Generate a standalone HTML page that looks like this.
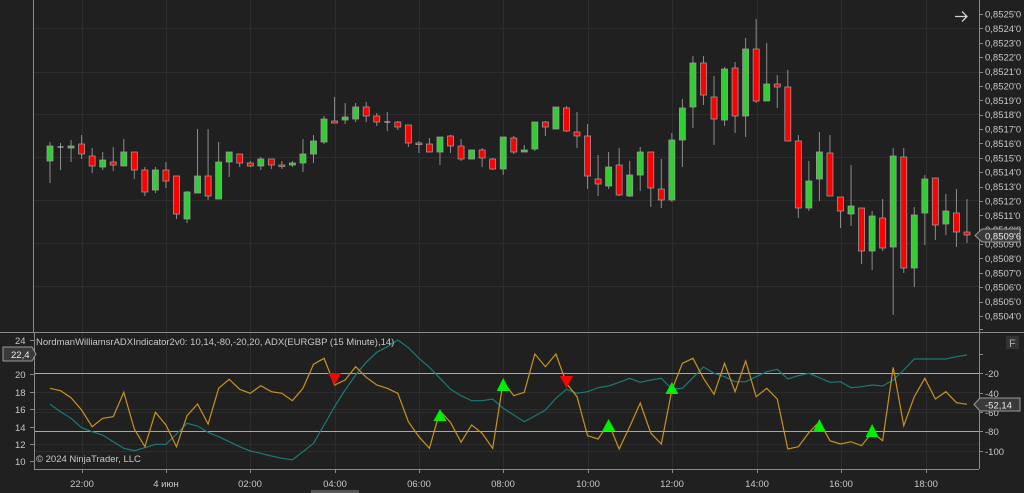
<!DOCTYPE html>
<html><head><meta charset="utf-8"><style>
html,body{margin:0;padding:0;background:#202020;width:1024px;height:493px;overflow:hidden}
svg{display:block;font-family:"Liberation Sans",sans-serif}
</style></head><body>
<svg width="1024" height="493" viewBox="0 0 1024 493" xmlns="http://www.w3.org/2000/svg">
<rect width="1024" height="493" fill="#202020"/>
<!-- grid -->
<g stroke="#2d2d2d" stroke-width="1">
<path d="M34 28.5H979M34 72.5H979M34 114.5H979M34 157.5H979M34 200.5H979M34 243.5H979M34 286.5H979"/>
<path d="M82.5 0V332M166.5 0V332M250.5 0V332M335.5 0V332M419.5 0V332M503.5 0V332M588.5 0V332M672.5 0V332M757.5 0V332M841.5 0V332M926.5 0V332"/>
<path d="M82.5 334V469M166.5 334V469M250.5 334V469M335.5 334V469M419.5 334V469M503.5 334V469M588.5 334V469M672.5 334V469M757.5 334V469M841.5 334V469M926.5 334V469"/>
<path d="M35 392.5H979M35 409.5H979M35 444.5H979M35 412.5H979M35 451.5H979"/>
</g>
<!-- axes -->
<g stroke="#8a8a8a" stroke-width="1" fill="none">
<path d="M33.5 0V332M979.5 0V469M0 332.5H1024M34.5 333V469M34 469.5H979"/>
<path d="M979 14.5h4M979 28.5h4M979 43.5h4M979 57.5h4M979 72.5h4M979 86.5h4M979 100.5h4M979 115.5h4M979 129.5h4M979 143.5h4M979 158.5h4M979 172.5h4M979 187.5h4M979 201.5h4M979 215.5h4M979 230.5h4M979 244.5h4M979 258.5h4M979 273.5h4M979 287.5h4M979 302.5h4M979 316.5h4M979 329.5h4"/>
<path d="M30 340.5h4M30 374.5h4M30 392.5h4M30 409.5h4M30 427.5h4M30 444.5h4M30 461.5h4M979 354.5h4M979 373.5h4M979 393.5h4M979 412.5h4M979 431.5h4M979 451.5h4"/>
<path d="M82.5 469v4M166.5 469v4M250.5 469v4M335.5 469v4M419.5 469v4M503.5 469v4M588.5 469v4M672.5 469v4M757.5 469v4M841.5 469v4M926.5 469v4"/>
</g>
<g stroke="#a8a8a8" stroke-width="1"><path d="M35 373.5H979M35 431.5H979"/></g>
<!-- candles -->
<g transform="translate(50,0) scale(1.0038,1)">
<path stroke="#8c8c8c" stroke-width="1" fill="none" d="M0 142V183M10.5 143V170M21 140V162M31.5 135V159M42 148V173M52.5 152V170M63 147V171M73.5 139V166M84 152V179M94.5 167V196M105 167V193M115.5 162V188M126 176V219M136.5 191V223M147 129V193M157.5 129V200M168 142V199M178.5 152V177M189 154V167M199.5 161V167M210 157V170M220.5 159V169M231 161V169M241.5 161V167M252 139V172M262.5 135V163M273 116V144M283.5 97V123M294 103V124M304.5 103V122M315 102V122M325.5 113V126M336 112V131M346.5 121V130M357 125V147M367.5 141V153M378 138V152M388.5 137V165M399 135V153M409.5 139V161M420 150V159M430.5 148V167M441 158V170M451.5 137V175M462 136V154M472.5 145V152M483 122V151M493.5 121V136M504 107V129M514.5 106V132M525 112V148M535.5 124V189M546 155V196M556.5 152V189M567 148V196M577.5 161V197M588 147V191M598.5 152V207M609 159V208M619.5 133V202M630 99V167M640.5 56V128M651 56V105M661.5 76V145M672 67V126M682.5 62V133M693 38V137M703.5 19V103M714 43V101M724.5 75V108M735 70V141M745.5 135V218M756 161V211M766.5 132V201M777 135V196M787.5 197V228M798 165V226M808.5 208V264M819 211V270M829.5 199V251M840 148V315M850.5 148V273M861 207V287M871.5 175V245M882 178V240M892.5 194V235M903 189V247M913.5 199V243"/>
<path stroke="#b0b0b0" stroke-width="1.2" d="M7.5 147H13.5M333 122H339"/>
<g fill="#32cd32" stroke="#9a9a9a" stroke-width="0.8">
<rect x="-3" y="146" width="6" height="15"/><rect x="18" y="146" width="6" height="2"/><rect x="49.5" y="160" width="6" height="7"/><rect x="70.5" y="152" width="6" height="14"/><rect x="102" y="170" width="6" height="20"/><rect x="133.5" y="192" width="6" height="27"/><rect x="144" y="176" width="6" height="17"/><rect x="165" y="162" width="6" height="37"/><rect x="175.5" y="152" width="6" height="10"/><rect x="207" y="159" width="6" height="7"/><rect x="238.5" y="163" width="6" height="2"/><rect x="249" y="154" width="6" height="9"/><rect x="259.5" y="141" width="6" height="13"/><rect x="270" y="119" width="6" height="23"/><rect x="291" y="117" width="6" height="3"/><rect x="301.5" y="107" width="6" height="12"/><rect x="385.5" y="137" width="6" height="15"/><rect x="417" y="150" width="6" height="9"/><rect x="448.5" y="137" width="6" height="32"/><rect x="469.5" y="150" width="6" height="2"/><rect x="480" y="122" width="6" height="27"/><rect x="501" y="107" width="6" height="22"/><rect x="553.5" y="167" width="6" height="19"/><rect x="574.5" y="175" width="6" height="21"/><rect x="585" y="152" width="6" height="23"/><rect x="616.5" y="140" width="6" height="60"/><rect x="627" y="108" width="6" height="32"/><rect x="637.5" y="63" width="6" height="44"/><rect x="669" y="69" width="6" height="51"/><rect x="690" y="49" width="6" height="67"/><rect x="711" y="84" width="6" height="17"/><rect x="753" y="181" width="6" height="27"/><rect x="763.5" y="152" width="6" height="27"/><rect x="795" y="206" width="6" height="8"/><rect x="816" y="216" width="6" height="35"/><rect x="837" y="156" width="6" height="91"/><rect x="858" y="215" width="6" height="53"/><rect x="868.5" y="179" width="6" height="34"/><rect x="889.5" y="211" width="6" height="13"/>
</g>
<g fill="#ff0000" stroke="#9a9a9a" stroke-width="0.8">
<rect x="28.5" y="144" width="6" height="10"/><rect x="39" y="156" width="6" height="10"/><rect x="60" y="162" width="6" height="3"/><rect x="81" y="152" width="6" height="18"/><rect x="91.5" y="170" width="6" height="22"/><rect x="112.5" y="170" width="6" height="11"/><rect x="123" y="176" width="6" height="38"/><rect x="154.5" y="176" width="6" height="20"/><rect x="186" y="154" width="6" height="9"/><rect x="196.5" y="163" width="6" height="3"/><rect x="217.5" y="159" width="6" height="6"/><rect x="228" y="165" width="6" height="1.5"/><rect x="280.5" y="121" width="6" height="2"/><rect x="312" y="107" width="6" height="9"/><rect x="322.5" y="116" width="6" height="6"/><rect x="343.5" y="122" width="6" height="5"/><rect x="354" y="125" width="6" height="18"/><rect x="364.5" y="143" width="6" height="1.5"/><rect x="375" y="144" width="6" height="8"/><rect x="396" y="136" width="6" height="10"/><rect x="406.5" y="146" width="6" height="13"/><rect x="427.5" y="150" width="6" height="8"/><rect x="438" y="159" width="6" height="10"/><rect x="459" y="138" width="6" height="14"/><rect x="490.5" y="122" width="6" height="5"/><rect x="511.5" y="108" width="6" height="23"/><rect x="522" y="132" width="6" height="4"/><rect x="532.5" y="136" width="6" height="40"/><rect x="543" y="179" width="6" height="5"/><rect x="564" y="165" width="6" height="30"/><rect x="595.5" y="152" width="6" height="36"/><rect x="606" y="189" width="6" height="11"/><rect x="648" y="63" width="6" height="32"/><rect x="658.5" y="97" width="6" height="22"/><rect x="679.5" y="68" width="6" height="48"/><rect x="700.5" y="49" width="6" height="52"/><rect x="721.5" y="84" width="6" height="3"/><rect x="732" y="87" width="6" height="54"/><rect x="742.5" y="141" width="6" height="67"/><rect x="774" y="153" width="6" height="43"/><rect x="784.5" y="197" width="6" height="14"/><rect x="805.5" y="208" width="6" height="43"/><rect x="826.5" y="218" width="6" height="30"/><rect x="847.5" y="157" width="6" height="111"/><rect x="879" y="178" width="6" height="47"/><rect x="900" y="213" width="6" height="19"/><rect x="910.5" y="232" width="6" height="3"/>
</g>
<!-- indicator -->
<polyline fill="none" stroke="#1a7a78" stroke-width="1.2" points="0,404.3 10.5,411.7 21,418.3 31.5,427.7 42,431.7 52.5,435 63,441.7 73.5,448.3 84,450.7 94.5,447.7 105,444.3 115.5,444.3 126,434 136.5,423.3 147,426 157.5,432.3 168,436.7 178.5,441.7 189,446.7 199.5,451 210,453.3 220.5,456 231,458.3 241.5,459.7 252,451.7 262.5,443.3 273,425 283.5,406.7 294,390 304.5,375 315,362.3 325.5,352.3 336,346.7 346.5,340 357,347.7 367.5,358.3 378,367.3 388.5,378.3 399,389.3 409.5,395.7 420,400.7 430.5,400.7 441,399 451.5,408.3 462,415 472.5,421.7 483,416 493.5,410 504,398.3 514.5,389.3 525,393.3 535.5,391.7 546,387.7 556.5,386 567,382.3 577.5,378.3 588,382.3 598.5,380 609,378.3 619.5,389 630,388.3 640.5,377.7 651,367 661.5,373.3 672,376.7 682.5,381.7 693,381.7 703.5,376.7 714,371.7 724.5,369.3 735,379 745.5,375.7 756,373.3 766.5,377.7 777,382.3 787.5,381.7 798,387.7 808.5,386.7 819,385 829.5,386 840,380 850.5,370 861,359 871.5,359 882,359 892.5,359 903,356.7 913.5,355"/>
<polyline fill="none" stroke="#c8921e" stroke-width="1.2" points="0,388.3 10.5,390.7 21,397.7 31.5,410 42,426.7 52.5,418.3 63,416.7 73.5,392.3 84,429 94.5,446.7 105,412.3 115.5,425 126,446.7 136.5,415.7 147,404 157.5,424 168,388.3 178.5,379.3 189,389.3 199.5,393.3 210,385.7 220.5,391.7 231,393.3 241.5,400.7 252,388.3 262.5,364.3 273,358.3 283.5,385 294,380 304.5,366.7 315,377.3 325.5,385 336,388.3 346.5,393.3 357,421.7 367.5,436.7 378,448.3 388.5,411 399,422.3 409.5,442.3 420,425 430.5,433.3 441,448.3 451.5,381.7 462,395.7 472.5,392.3 483,354 493.5,366.7 504,354 514.5,383.3 525,396.7 535.5,435.7 546,439 556.5,423.3 567,449 577.5,426.7 588,403 598.5,433 609,444 619.5,390 630,363.3 640.5,358.3 651,378.3 661.5,394.3 672,363.3 682.5,391.7 693,361 703.5,396.7 714,388.3 724.5,399 735,449 745.5,446.7 756,432.7 766.5,421.7 777,440.7 787.5,444 798,441.7 808.5,445.7 819,432.3 829.5,440.7 840,367.3 850.5,425.7 861,396.7 871.5,378.3 882,399 892.5,391.7 903,402.7 913.5,404.3"/>
<g fill="#ff0000"><polygon points="277,373 290,373 283.5,385"/><polygon points="508,376 521,376 514.5,388"/></g>
<g fill="#00ee00"><polygon points="388.5,409 382,421 395,421"/><polygon points="451.5,378 445,391 458,391"/><polygon points="556.5,419 550,431 563,431"/><polygon points="619.5,382 613,394 626,394"/><polygon points="766.5,419 760,432 773,432"/><polygon points="819,424 812.5,437 825.5,437"/></g>
</g>
<!-- price labels -->
<g fill="#c8c8c8" font-size="9.5">
<text x="985" y="17.5">0,8525'0</text><text x="985" y="31.9">0,8524'0</text><text x="985" y="46.3">0,8523'0</text><text x="985" y="60.7">0,8522'0</text><text x="985" y="75">0,8521'0</text><text x="985" y="89.4">0,8520'0</text><text x="985" y="103.8">0,8519'0</text><text x="985" y="118.2">0,8518'0</text><text x="985" y="132.5">0,8517'0</text><text x="985" y="146.9">0,8516'0</text><text x="985" y="161.3">0,8515'0</text><text x="985" y="175.7">0,8514'0</text><text x="985" y="190">0,8513'0</text><text x="985" y="204.4">0,8512'0</text><text x="985" y="218.8">0,8511'0</text><text x="985" y="233.2">0,8510'0</text><text x="985" y="247.5">0,8509'0</text><text x="985" y="261.9">0,8508'0</text><text x="985" y="276.3">0,8507'0</text><text x="985" y="290.7">0,8506'0</text><text x="985" y="305">0,8505'0</text><text x="985" y="319.4">0,8504'0</text>
</g>
<path d="M975 235.5L982 229H1020V242H982Z" fill="#3a3a3a" stroke="#9a9a9a" stroke-width="1"/>
<text x="985" y="239.5" fill="#ececec" font-size="9.5">0,8509'6</text>
<!-- arrow -->
<path d="M955 16.5H967M962 11.5L967 16.5L962 21.5" stroke="#d0d0d0" stroke-width="1.3" fill="none"/>
<!-- indicator labels -->
<g fill="#c8c8c8" font-size="9.5">
<text x="15" y="344">24</text><text x="15" y="378">20</text><text x="15" y="396">18</text><text x="15" y="413">16</text><text x="15" y="431">14</text><text x="15" y="448">12</text><text x="15" y="465">10</text>
<text x="985" y="377">-20</text><text x="985" y="397">-40</text><text x="985" y="416">-60</text><text x="985" y="435">-80</text><text x="985" y="455">-100</text>
<text x="36" y="345">NordmanWilliamsrADXIndicator2v0: 10,14,-80,-20,20, ADX(EURGBP (15 Minute),14)</text>
<text x="36" y="462">© 2024 NinjaTrader, LLC</text>
</g>
<path d="M3 347H32L36 354L32 361H3Z" fill="#3a3a3a" stroke="#9a9a9a"/>
<text x="11" y="358" fill="#ececec" font-size="9.5">22,4</text>
<path d="M974 404.5L980 398H1020V411H980Z" fill="#3a3a3a" stroke="#9a9a9a"/>
<text x="985" y="408.5" fill="#ececec" font-size="9.5">-52,14</text>
<rect x="1006" y="336" width="13" height="13" fill="#333"/>
<text x="1009" y="347" fill="#aaa" font-size="11">F</text>
<!-- time labels -->
<g fill="#c8c8c8" font-size="9.5" text-anchor="middle">
<text x="82" y="487">22:00</text><text x="166" y="487">4 июн</text><text x="250" y="487">02:00</text><text x="335" y="487">04:00</text><text x="419" y="487">06:00</text><text x="503" y="487">08:00</text><text x="588" y="487">10:00</text><text x="672" y="487">12:00</text><text x="757" y="487">14:00</text><text x="841" y="487">16:00</text><text x="926" y="487">18:00</text>
</g>
<rect x="311" y="490" width="48" height="3" fill="#555"/>
</svg>
</body></html>
